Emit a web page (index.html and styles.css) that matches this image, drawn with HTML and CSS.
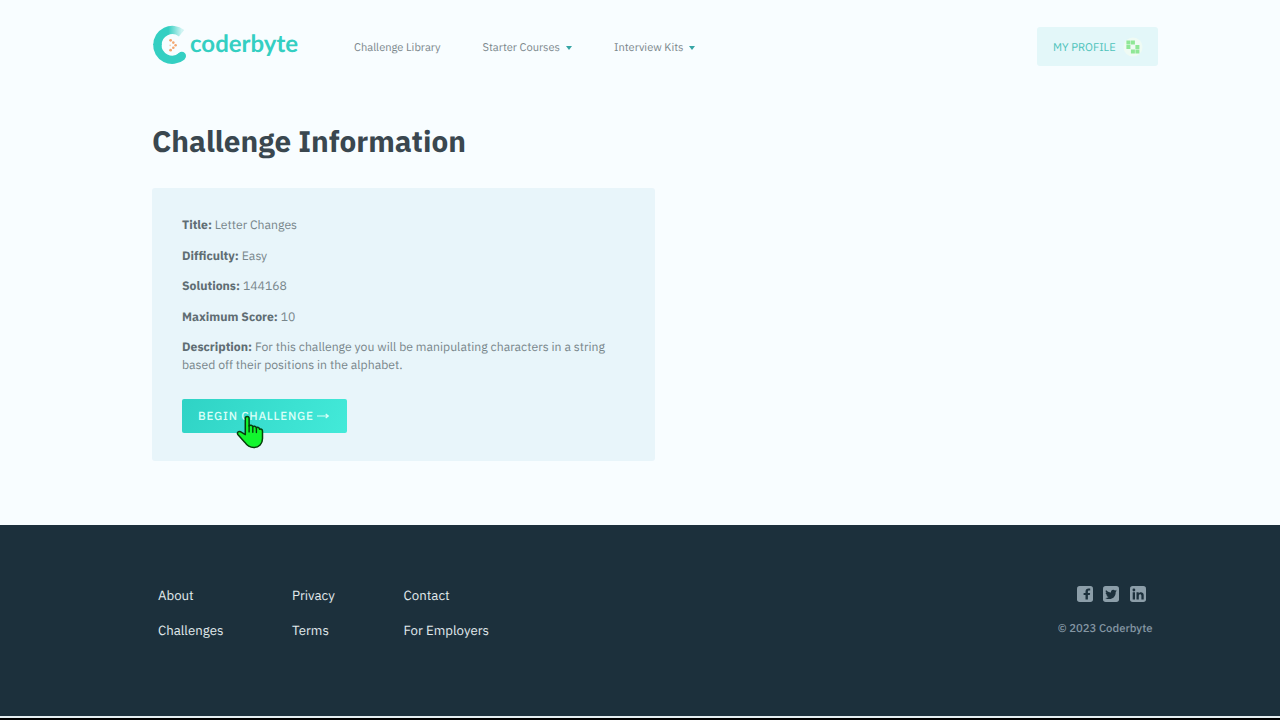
FILE: index.html
```html
<!DOCTYPE html>
<html lang="en">
<head>
<meta charset="utf-8">
<title>Challenge Information</title>
<link rel="stylesheet" href="styles.css">
</head>
<body>
<header class="header wrap">
  <a class="logo">
    <svg class="logo-mark" width="36" height="40" viewBox="0 0 36 40">
      <defs><linearGradient id="fade" x1="0" y1="0" x2="1" y2="0"><stop offset=".45" stop-color="#34cfc2"/><stop offset="1" stop-color="#34cfc2" stop-opacity=".2"/></linearGradient></defs>
      <path d="M5.5 20A14.8 14.8 0 0 1 29.6 8.3" fill="none" stroke="url(#fade)" stroke-width="8.5"/>
      <path d="M5.4 19A14.8 14.8 0 0 0 29.8 31.2" fill="none" stroke="#34cfc2" stroke-width="8.5"/>
      <circle cx="29.8" cy="31" r="4.2" fill="#34cfc2"/>
      <g fill="#f3a66f"><circle cx="18.6" cy="15.3" r="1.4"/><circle cx="21.3" cy="17.6" r="1.3"/><circle cx="23.6" cy="20.2" r="1.3"/><circle cx="21.3" cy="22.8" r="1.3"/><circle cx="18.6" cy="25.2" r="1.4"/><circle cx="18.2" cy="20.3" r=".9" opacity=".5"/></g>
    </svg>
    <span class="logo-text">coderbyte</span>
  </a>
  <nav class="nav">
    <a class="nav-library">Challenge Library</a>
    <a class="nav-courses">Starter Courses<i class="caret"></i></a>
    <a class="nav-kits">Interview Kits<i class="caret"></i></a>
  </nav>
  <a class="profile"><span>MY PROFILE</span>
    <svg width="20" height="20" viewBox="0 0 20 20"><circle cx="10" cy="10" r="9.5" fill="#effbf4"/><path fill="#8fe796" d="M3.4 3.4h4v4h-4zM7.9 3.4h4v4h-4zM3.4 7.9h4v4h-4zM12.4 7.9h4v4h-4zM12.4 12.4h4v4h-4zM7.9 12.4h4v4h-4z"/></svg>
  </a>
</header>
<main class="main wrap">
  <h1>Challenge Information</h1>
  <section class="card">
    <p><b>Title:</b> Letter Changes</p>
    <p><b>Difficulty:</b> Easy</p>
    <p><b>Solutions:</b> 144168</p>
    <p><b>Maximum Score:</b> 10</p>
    <p><b>Description:</b> For this challenge you will be manipulating characters in a string<br>based off their positions in the alphabet.</p>
    <a class="begin"><span>BEGIN CHALLENGE</span>
      <svg class="arrow" width="13" height="8" viewBox="0 0 13 8"><path d="M0 4h11.2M8.7 2 11.3 4 8.7 6" fill="none" stroke="#d9fff8" stroke-width="1.2"/></svg>
      <svg class="cursor" width="28" height="34" viewBox="0 0 28 34"><path d="M9.3 3.3C9.3.8 13 .8 13.1 3.3V11c.7-1.3 3.5-1 3.6.7.8-1 3.3-.6 3.6 1.1 1-.9 3.2-.3 3.4 1.5 1-.7 2.8 0 2.8 1.8v7.4c0 5.5-3.5 9-8.6 9-4.5 0-7-2-9.2-5.3l-6.9-7.8c-1.1-1.8.8-3.5 2.6-2.7l4.9 3z" fill="#12f52e" stroke="#063d0b" stroke-width="1.5" stroke-linejoin="round"/><path d="M13.1 10.8v6.1M16.8 12v5.2M20.4 13v4.5" stroke="#063d0b" stroke-width="1.4" stroke-linecap="round"/></svg>
    </a>
  </section>
</main>
<footer class="footer">
  <div class="footer-inner wrap">
    <div class="links">
      <a>About</a><a>Privacy</a><a>Contact</a>
      <a>Challenges</a><a>Terms</a><a>For Employers</a>
    </div>
    <div class="legal">
      <div class="social">
        <svg width="16" height="16" viewBox="0 0 16 16"><rect width="16" height="16" rx="2.7" fill="#8c9ea9"/><path fill="#1c303c" d="M8.5 13.6V9H6.6V6.9h1.900V5.500c0-2.100 1.200-3.100 3.200-3.100h1.500v2.100h-1c-1 0-1.300.4-1.300 1.200v1.200h2.200l-.3 2.100h-1.900v4.600z"/></svg>
        <svg width="16" height="16" viewBox="0 0 16 16"><rect width="16" height="16" rx="2.7" fill="#8c9ea9"/><path fill="#1c303c" d="M13.8 4.6c-.5.2-.9.3-1.3.4.5-.3.8-.7 1-1.2-.5.3-1 .5-1.5.6-1.7-1.7-4.5-.4-4 2-2 0-3.8-1-5-2.5-.7 1.2-.3 2.5.7 3.2-.4 0-.8-.1-1.1-.3 0 1.2.8 2.2 1.9 2.4-.3.1-.7.1-1 0 .3 1 1.200 1.700 2.200 1.700-1 .8-2.200 1.100-3.500 1 5.200 3 10.700-.1 10.500-5.900.4-.4.800-.8 1.100-1.400z"/></svg>
        <svg width="16" height="16" viewBox="0 0 16 16"><rect width="16" height="16" rx="2.7" fill="#8c9ea9"/><g fill="#1c303c"><circle cx="3.9" cy="4" r="1.4"/><path d="M2.7 6.3h2.300v7.200H2.700zM6.500 6.300h2.200v1c1.100-1.800 5-1.700 5 1.800v4.400h-2.300V9.800c0-2.300-2.600-2-2.600 0v3.700H6.500z"/></g></svg>
      </div>
      <span class="copyright">© 2023 Coderbyte</span>
    </div>
  </div>
</footer>
<div class="edge"></div>
</body>
</html>
```

FILE: styles.css
```css
* { box-sizing: border-box; }
body { margin: 0; height: 720px; overflow: hidden; display: flex; flex-direction: column; background: #f8fdff; font-family: "IBM Plex Sans", Roboto, sans-serif; text-rendering: geometricPrecision; }
.wrap { width: 1006px; margin-left: 152px; }
.header { height: 94px; display: flex; align-items: flex-start; }
.logo { display: flex; width: 202px; padding-top: 25px; }
.logo-mark { flex: none; }
.logo-text { margin-left: 2px; font: 700 24px/37px Lato, sans-serif; color: #34cfc2; }
.nav { display: flex; padding-top: 39px; font-size: 11.12px; line-height: 18px; color: #7b878c; white-space: nowrap; }
.nav a { display: flex; align-items: center; }
.nav-library { width: 128.5px; }
.nav-courses { width: 131.5px; }
.caret { margin-left: 6px; border: 3px solid transparent; border-top: 4px solid #35a5a5; border-bottom: 0; }
.profile { display: flex; align-items: center; width: 121px; height: 39px; margin: 27px 0 0 auto; padding-left: 16px; background: #e3f7f9; border-radius: 3px; color: #4ec3bb; font-size: 11.15px; white-space: nowrap; }
.profile span { width: 70px; padding-top: 2px; }
.main { height: 431px; }
h1 { margin: 28px 0 0; font-size: 29.75px; line-height: 40px; font-weight: 700; color: #3a474f; white-space: nowrap; }
.card { width: 503px; height: 273px; margin-top: 26px; padding: 28px 30px; background: #e8f5fa; border-radius: 3px; color: #78868b; font-size: 12.22px; line-height: 18px; white-space: nowrap; }
.card p { margin: 0 0 12.55px; }
.card b { color: #5f6d73; }
.begin { position: relative; display: flex; align-items: center; width: 165px; height: 34px; margin-top: 24.8px; padding-left: 16px; background: linear-gradient(120deg, #2fd3c5, #43ead9); border-radius: 2px; color: #d9fff8; font-size: 11.7px; font-weight: 500; letter-spacing: .73px; }
.begin span { padding-top: 2px; }
.arrow { margin: 1px 0 0 3px; }
.cursor { position: absolute; left: 54px; top: 16px; }
.footer { height: 191px; background: #1c303c; color: #e1eaed; }
.footer-inner { display: flex; justify-content: space-between; padding: 61px 5.5px 0 6px; }
.links { display: grid; grid-template-columns: 134px 111.5px 110px; grid-auto-rows: 34.5px; margin-top: -1px; font-size: 13.25px; line-height: 20px; white-space: nowrap; }
.legal { display: flex; flex-direction: column; align-items: flex-end; }
.social { display: flex; gap: 10.2px; margin-right: 7px; }
.copyright { margin-top: 18px; font-size: 11.3px; font-weight: 500; line-height: 18px; color: #8496a3; white-space: nowrap; }
.edge { height: 4px; background: #000; border-top: 2px solid #e5eff2; }
```
